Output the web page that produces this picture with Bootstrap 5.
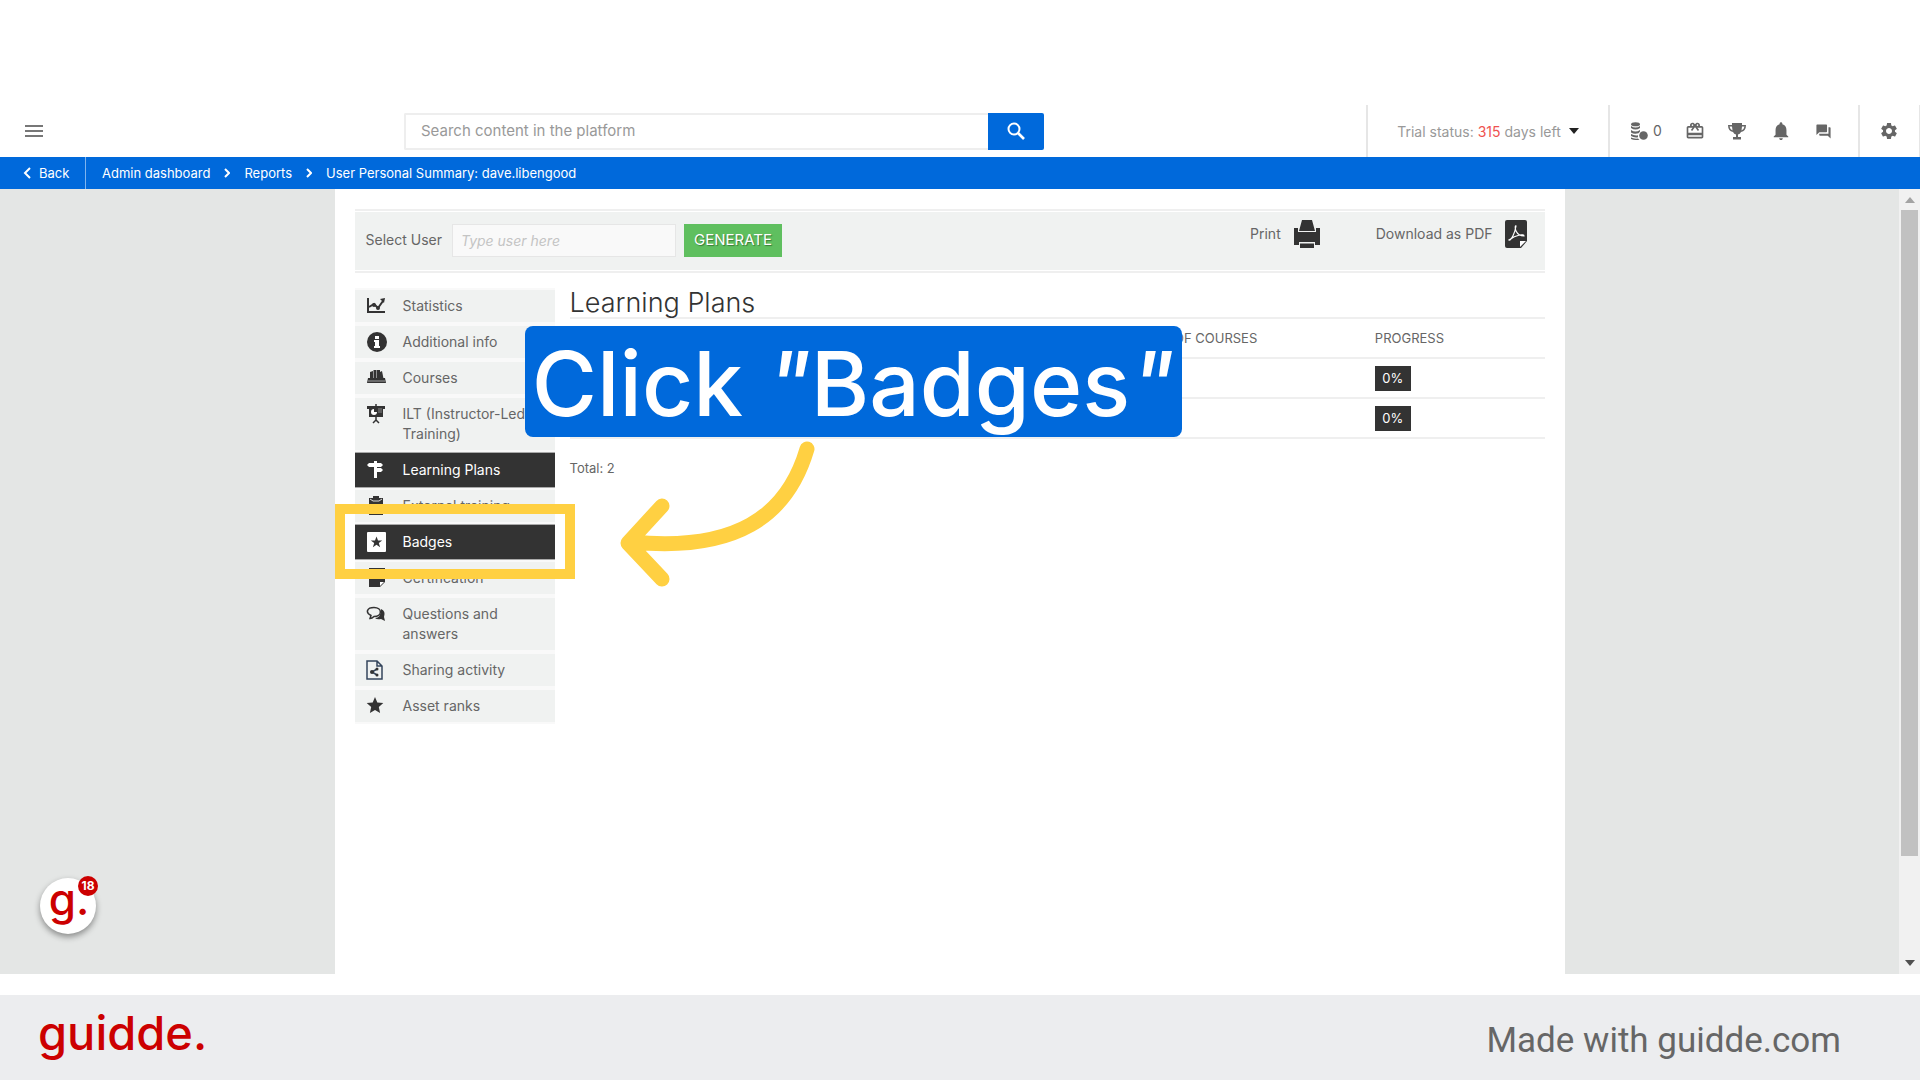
<!DOCTYPE html>
<html lang="en">
<head>
<meta charset="utf-8">
<meta name="viewport" content="width=device-width, initial-scale=1">
<title>User Personal Summary</title>
<link href="https://cdn.jsdelivr.net/npm/bootstrap@5.3.0/dist/css/bootstrap.min.css" rel="stylesheet">
<style>
body{font-family:Inter,"Open Sans",sans-serif;font-size:14px;line-height:20px;color:#666;background:#fff}
a{color:inherit;text-decoration:none}
svg{display:block;flex:none}
.stage{padding-top:105px}
.top-head{height:52px}
.menu-btn{margin-left:24px;width:20px}
.find-form{margin-left:360px;width:640px;height:37px}
.find-form input{border:2px solid #eee;border-right:0;border-radius:2px 0 0 2px;padding:0 15px;font-size:15px;color:#666}
.find-form input::placeholder{color:#999;opacity:1}
.find-form button{width:56px;background:#0069db;border-radius:0 2px 2px 0}
.head-cell{border-left:2px solid #e6e6e6;height:52px}
.trial{width:242px;color:#999}
.trial button{font-size:inherit;color:inherit}
.trial em{font-style:normal;color:#ef5350}
.tools{width:250px;padding-left:20px;color:#666}
.tools a{width:44px}
.tools .coins{width:56px;gap:5px}
.gear{width:62px;border-right:1px solid #e6e6e6;color:#666;padding-right:2px}
.crumbs{height:32px;background:#0069db;color:#fff;font-size:13px}
.crumbs .back{width:86px;padding-left:23px;border-right:1px solid #7fb4ee}
.crumbs ol{padding-left:16px;gap:14px}
.view{background:#e4e6e5}
.sheet{width:1230px;max-width:100%;background:#fff;padding:20px}
.picker{height:64px;background:#f0f2f1;border:solid #efefef;border-width:2px 0;box-shadow:inset 0 1px #fff,inset 0 -1px #fff;padding:0 18px 2px 11px}
.picker input{width:224px;height:33px;border:1px solid #e6e6e6;background:#f9f9f9;padding:0 8px;margin:0 8px 0 10px;font-size:14px}
.picker input::placeholder{color:#c4c4c4;font-style:italic;opacity:1}
.picker .gen{width:98px;height:33px;background:#5fbf5f;color:#fff;text-shadow:1px 1px 1px #3a7a3a;font-size:15px}
.exports{padding-bottom:12px}
.exports a{gap:12px}
.exports a+a{margin-left:55px}
.side{width:200px;margin-top:15px}
.side li{background:#f0f2f1;border:solid #f9f9f9;border-width:2px 0;padding:6px 0 6px 11px}
.side li.on{background:#333;color:#fff;border-width:1px 0;border-color:#aaa;padding:7px 0 7px 11px}
.side a{display:flex}
.side svg{width:22px;height:22px;margin:-1px 15px -1px 0;color:#333}
.side .on svg{color:#fff}
.marker{inset:-21px -20px -20px;border:10px solid #ffd042;z-index:2;pointer-events:none}
.plans{padding-left:15px;padding-top:16px}
.plans h1{font-size:27px;line-height:28px;font-weight:300;color:#333;margin:0}
.plan-grid{border-top:2px solid #efefef;font-size:13px}
.plan-grid th,.plan-grid td{font-weight:400;height:40px;padding:0;border-bottom:2px solid #efefef}
.pct{background:#333;color:#fff;width:36px;height:25px}
.total{font-size:13px;margin:19px 0 0}
.callout{left:190px;top:137px;width:657px;height:111px;background:#0069db;color:#fff;border-radius:8px;font-size:89px;line-height:115px;font-weight:500;z-index:3}
.swoosh{left:270px;top:243px;z-index:3}
.bar-col{width:21px;background:#f1f1f1}
.bar-thumb{width:17px;height:84%;background:#c1c1c1;margin-top:7px}
.fab{left:40px;bottom:40px;width:56px;height:56px;background:#fff;border-radius:50%;box-shadow:0 3px 6px #0006;color:#c00;font-size:44px;line-height:40px;font-weight:500}
.fab-letter{display:block;padding:0 0 14px 2px}
.fab-count{right:-2px;top:-2px;width:20px;height:20px;border-radius:50%;background:#c00;color:#fff;font-size:12px;line-height:20px;font-weight:700}
.foot{height:85px;margin-top:21px;background:#ecedef;padding:8px 79px 0 38px}
.brand-word{font-size:47px;line-height:60px;font-weight:500;color:#c00}
.made{font-family:Roboto,sans-serif;font-size:35px;line-height:60px;color:#666;padding-top:8px}
</style>
<script src="https://cdn.jsdelivr.net/npm/bootstrap@5.3.0/dist/js/bootstrap.bundle.min.js"></script>
</head>
<body>
<div class="stage d-flex flex-column min-vh-100">
<header class="top-head d-flex align-items-center">
  <button class="menu-btn btn p-0 border-0" aria-label="Menu"><svg width="20" height="14" stroke="#777" stroke-width="2"><path d="M1 2h18M1 7h18M1 12h18"/></svg></button>
  <form class="find-form d-flex" role="search">
    <input class="flex-grow-1" type="search" placeholder="Search content in the platform" aria-label="Search content in the platform">
    <button class="border-0 d-flex align-items-center justify-content-center" type="button" aria-label="Search"><svg width="18" height="18" fill="none" stroke="#fff" stroke-width="2"><circle cx="7" cy="7" r="5.5"/><path d="M11 11l6 6" stroke-width="2.6"/></svg></button>
  </form>
  <div class="head-cell trial ms-auto d-flex"><button class="btn p-0 border-0 w-100 d-flex align-items-center justify-content-center gap-2"><span>Trial status: <em>315</em> days left</span><svg width="10" height="6" fill="#222"><path d="M0 0h10L5 6z"/></svg></button></div>
  <nav class="head-cell tools d-flex align-items-center" aria-label="Tools">
    <a href="#" class="coins d-flex align-items-center" aria-label="Coins"><svg width="18" height="18" fill="currentColor"><ellipse cx="5.500" cy="2.200" rx="4.500" ry="2"/><path d="M1 4q4.500 3 9 0v2q-4.500 3-9 0zM1 8q4.500 3 9 0v1.500q-1 1-1.500 1.800Q4 12.500 1 10.500zM1 12q3.500 2 7 1.300v2Q4 16 1 14zM1 15.500Q4 17 8 16.500q1 1 1.500 1.200Q4 18.500 1 17z"/><circle cx="13.500" cy="13.500" r="4.300"/></svg>0</a>
    <a href="#" class="d-flex" aria-label="Gifts"><svg width="20" height="20" viewBox="0 0 24 24" fill="currentColor"><path d="M20 6h-2.180c.11-.31.18-.65.18-1 0-1.660-1.340-3-3-3-1.050 0-1.960.54-2.500 1.350l-.5.67-.5-.68C10.960 2.540 10.050 2 9 2 7.340 2 6 3.340 6 5c0 .35.07.69.18 1H4c-1.110 0-1.990.89-1.990 2L2 19c0 1.110.89 2 2 2h16c1.110 0 2-.89 2-2V8c0-1.110-.89-2-2-2zm-5-2c.55 0 1 .45 1 1s-.45 1-1 1-1-.45-1-1 .45-1 1-1zM9 4c.55 0 1 .45 1 1s-.45 1-1 1-1-.45-1-1 .45-1 1-1zm11 15H4v-2h16v2zm0-5H4V8h5.080L7 10.830 8.620 12 11 8.760l1-1.360 1 1.360L15.380 12 17 10.830 14.920 8H20v6z"/></svg></a>
    <a href="#" class="d-flex" aria-label="Leaderboard"><svg width="18" height="18" viewBox="0 0 18 18" fill="currentColor"><path d="M4 1h10v2h4q0 6-5 7-1 2-3 2.500V15h3v2.500H5V15h3v-2.500Q6 12 5 10 0 9 0 3h4zM1.500 4.500Q2 7.500 4.500 8.400L4 4.500zm15 0H14l-.5 3.900Q16 7.500 16.500 4.500z"/></svg></a>
    <a href="#" class="d-flex" aria-label="Notifications"><svg width="18" height="20" viewBox="3 1 18 22" fill="currentColor"><path d="M12 22c1.100 0 2-.9 2-2h-4c0 1.100.89 2 2 2zm6-6v-5c0-3.070-1.640-5.640-4.500-6.320V4c0-.83-.67-1.500-1.500-1.500s-1.500.67-1.500 1.500v.68C7.630 5.360 6 7.920 6 11v5l-2 2v1h16v-1l-2-2z"/></svg></a>
    <a href="#" class="d-flex" aria-label="Messages"><svg width="17" height="17" viewBox="0 1 24 22" fill="currentColor"><path d="M21 6h-2v9H6v2c0 .55.45 1 1 1h11l4 4V7c0-.55-.45-1-1-1zm-4 6V3c0-.55-.45-1-1-1H3c-.55 0-1 .45-1 1v14l4-4h10c.55 0 1-.45 1-1z"/></svg></a>
  </nav>
  <a href="#" class="head-cell gear d-flex align-items-center justify-content-center" aria-label="Settings"><svg width="20" height="20" viewBox="0 0 24 24" fill="currentColor"><path d="M19.140 12.940c.04-.3.06-.61.06-.94 0-.32-.02-.64-.07-.94l2.030-1.580c.18-.14.23-.41.12-.61l-1.920-3.320c-.12-.22-.37-.29-.59-.22l-2.390.96c-.5-.38-1.030-.7-1.620-.94l-.36-2.540c-.04-.24-.24-.41-.48-.41h-3.840c-.24 0-.43.17-.47.41l-.36 2.540c-.59.24-1.130.57-1.620.94l-2.390-.96c-.22-.08-.47 0-.59.22L2.740 8.870c-.12.21-.08.47.12.61l2.030 1.580c-.05.3-.09.63-.09.94s.02.64.07.94l-2.030 1.580c-.18.14-.23.41-.12.61l1.920 3.320c.12.22.37.29.59.22l2.390-.96c.5.38 1.030.7 1.620.94l.36 2.540c.05.24.24.41.48.41h3.840c.24 0 .44-.17.47-.41l.36-2.540c.59-.24 1.130-.56 1.620-.94l2.390.96c.22.08.47 0 .59-.22l1.920-3.320c.12-.22.07-.47-.12-.61l-2.010-1.580zM12 15.600c-1.980 0-3.600-1.620-3.600-3.600s1.620-3.600 3.600-3.600 3.600 1.620 3.600 3.600-1.620 3.600-3.600 3.600z"/></svg></a>
</header>
<nav class="crumbs d-flex" aria-label="Breadcrumb">
  <a href="#" class="back d-flex align-items-center"><svg class="me-2" width="8" height="12" fill="none" stroke="#fff" stroke-width="2"><path d="M7 1L2 6l5 5"/></svg>Back</a>
  <ol class="list-unstyled d-flex align-items-center mb-0">
    <li><a href="#">Admin dashboard</a></li>
    <li aria-hidden="true"><svg width="6" height="10" fill="none" stroke="#fff" stroke-width="2"><path d="M1 1l4 4-4 4"/></svg></li>
    <li><a href="#">Reports</a></li>
    <li aria-hidden="true"><svg width="6" height="10" fill="none" stroke="#fff" stroke-width="2"><path d="M1 1l4 4-4 4"/></svg></li>
    <li>User Personal Summary: dave.libengood</li>
  </ol>
</nav>
<main class="view d-flex flex-grow-1 position-relative">
  <div class="flex-grow-1 d-flex justify-content-center">
    <div class="sheet position-relative">
      <form class="picker d-flex align-items-center">
        <label for="who">Select User</label>
        <input id="who" type="text" placeholder="Type user here">
        <button type="button" class="gen border-0 p-0">GENERATE</button>
        <div class="exports ms-auto d-flex align-items-center">
          <a href="#" class="d-flex align-items-center">Print<svg width="28" height="28" viewBox="-1 0 28 28" fill="#333"><path d="M8 0h10l3 11H5zM0 8h4v4h18V8h4v17h-5v-3H5v3H0z"/><path d="M6 23.500h14V28H6z"/></svg></a>
          <a href="#" class="d-flex align-items-center">Download as PDF<svg width="22" height="28"><path d="M2 0h18q2 0 2 2v19l-6 7H2q-2 0-2-2V2q0-2 2-2z" fill="#333"/><path d="M15 27v-6h6z" fill="#fff"/><path d="M4 20c2 1 6-7 7-14-1-1-1 3 0 5 2 4 6 5 8 5 0-2-7-2-15 4z" fill="none" stroke="#fff" stroke-width="1.200"/></svg></a>
        </div>
      </form>
      <div class="d-flex">
        <ul class="side list-unstyled mb-0 flex-shrink-0">
          <li><a href="#"><svg viewBox="0 0 22 22" fill="none" stroke="currentColor" stroke-width="2"><path d="M2 3v14h17M3 12l5-3 4 4 5-7"/><path d="M14 4l5-1-1 5z" fill="currentColor" stroke="none"/><circle cx="8" cy="10" r="1"/><circle cx="12" cy="13" r="1"/></svg>Statistics</a></li>
          <li><a href="#"><svg viewBox="0 0 22 22"><circle cx="11" cy="11" r="10" fill="currentColor"/><path d="M9 5h4v3H9zM8 9h5v6h1v2H8v-2h1v-4H8z" fill="#fff"/></svg>Additional info</a></li>
          <li><a href="#"><svg viewBox="0 0 22 22" fill="currentColor"><path d="M4 5l3-1v10H4zM7.500 3h3v11h-3zM11 3h3v11h-3zM14 5l2-1 2 10h-4zM2 11h17l1 5H1z"/><path d="M2 14h17" stroke="#f0f2f1" stroke-width=".6"/></svg>Courses</a></li>
          <li><a href="#"><svg viewBox="0 0 22 22"><path d="M1 3h18v3H1zM3 6h14v8H3z" fill="currentColor"/><path d="M10 1v3M10 14v3l-3 3M10 17l3 3" stroke="currentColor" stroke-width="1.500" fill="none"/><path d="M8 6a3 3 0 1 0 3 3H8z" fill="#fff"/><path d="M13 5v5M15 5v5" stroke="#888"/></svg><span>ILT (Instructor-Led Training)</span></a></li>
          <li class="on"><a href="#"><svg viewBox="0 0 22 22" fill="currentColor"><path d="M8 2h3v17H8zM3 4h12l2 2-2 2H3L1 6zM11 9h4l2 2-2 2h-4z"/></svg>Learning Plans</a></li>
          <li><a href="#"><svg viewBox="0 0 22 22"><path d="M3 3h4V1h6v2h4v17H3z" fill="currentColor"/><path d="M4 4l3 2h6l3-2" stroke="#ddd" fill="none"/></svg>External training</a></li>
          <li class="on position-relative"><a href="#"><svg viewBox="0 0 22 22"><rect x="1" y="1" width="19" height="20" rx="1" fill="#fff"/><path d="M10.500 5.500l1.500 4h4.200l-3.400 2.600 1.300 4.200-3.600-2.500-3.600 2.500 1.300-4.200-3.400-2.600H9z" fill="#333"/></svg>Badges</a><span class="marker position-absolute"></span></li>
          <li><a href="#"><svg viewBox="0 0 22 22"><path d="M3 1h16v14l-5 5H3z" fill="currentColor"/><path d="M14 19v-4h4z" fill="#fff"/></svg>Certification</a></li>
          <li><a href="#"><svg viewBox="0 0 22 22"><path d="M15 6q5 2 3 8l1 4-4-2q-4 1-6-1 6 0 6-9z" fill="currentColor"/><path d="M8 4.500c8.500 0 8.500 9 0 9-1 1-3 2-4 2l1-3C-1 9.500 1 4.500 8 4.500z" fill="#f0f2f1" stroke="currentColor" stroke-width="1.500"/></svg><span>Questions and<br>answers</span></a></li>
          <li><a href="#"><svg viewBox="0 0 22 22" fill="none" stroke="#34455c" stroke-width="1.500"><path d="M1 2h10l5 5v13H1zM11 2v5h5"/><path d="M11 10l-5 3 5 3"/><g fill="#333" stroke="none"><circle cx="6" cy="13" r="2"/><circle cx="11" cy="10" r="1.500"/><circle cx="11" cy="16" r="1.500"/></g></svg>Sharing activity</a></li>
          <li><a href="#"><svg viewBox="0 0 22 22" fill="currentColor"><path d="M9 2l2.300 5.500 6 .6-4.500 4 1.300 6L9 15l-5.100 3.100 1.300-6-4.500-4 6-.6z"/></svg>Asset ranks</a></li>
        </ul>
        <section class="plans flex-grow-1">
          <h1>Learning Plans</h1>
          <table class="plan-grid w-100">
            <colgroup><col style="width:62%"><col style="width:20.600%"><col></colgroup>
            <thead><tr><th></th><th>OF COURSES</th><th>PROGRESS</th></tr></thead>
            <tbody>
              <tr><td></td><td></td><td><span class="pct d-flex align-items-center justify-content-center">0%</span></td></tr>
              <tr><td></td><td></td><td><span class="pct d-flex align-items-center justify-content-center">0%</span></td></tr>
            </tbody>
          </table>
          <p class="total">Total: 2</p>
        </section>
      </div>
      <div class="callout position-absolute text-center text-nowrap">Click <i>"</i>Badges<i>"</i></div>
      <svg class="swoosh position-absolute" width="220" height="160" fill="none" stroke="#ffd042" stroke-width="15" stroke-linecap="round" stroke-linejoin="round"><path d="M202 17C182 85 130 120 27 110M57 74L23 111l34 36"/></svg>
    </div>
  </div>
  <div class="bar-col d-flex flex-column align-items-center justify-content-between py-2" aria-hidden="true">
    <svg width="10" height="6" fill="#a3a3a3"><path d="M5 0l5 6H0z"/></svg>
    <div class="bar-thumb mb-auto"></div>
    <svg width="10" height="6" fill="#505050"><path d="M0 0h10L5 6z"/></svg>
  </div>
  <button class="fab position-absolute border-0 p-0" aria-label="Guidde"><span class="fab-letter">g.</span><span class="fab-count position-absolute">18</span></button>
</main>
<footer class="foot d-flex justify-content-between align-items-start">
  <a href="#" class="brand-word">guidde.</a>
  <span class="made">Made with guidde.com</span>
</footer>
</div>
</body>
</html>
